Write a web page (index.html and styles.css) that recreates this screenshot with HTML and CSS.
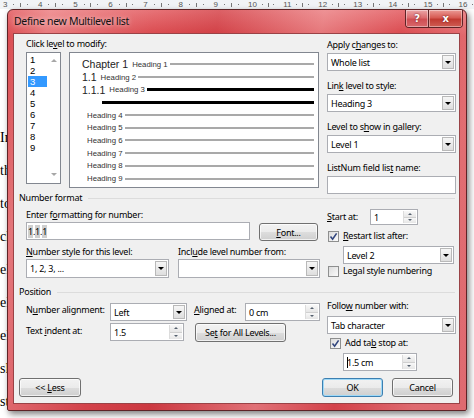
FILE: index.html
```html
<!DOCTYPE html>
<html lang="en">

<head>
  <meta charset="UTF-8">
  <meta name="viewport" content="width=device-width, initial-scale=1.0">
  <link rel="stylesheet" href="styles.css">
  <title>Define new Multilevel list</title>
</head>

<body>
  <div class="ruler">
    <span class="seg"><b>3</b><i class="dot"></i><i class="tick"></i><i class="dot"></i></span>
    <span class="seg"><b>4</b><i class="dot"></i><i class="tick"></i><i class="dot"></i></span>
    <span class="seg"><b>5</b><i class="dot"></i><i class="tick"></i><i class="dot"></i></span>
    <span class="seg"><b>6</b><i class="dot"></i><i class="tick"></i><i class="dot"></i></span>
    <span class="seg"><b>7</b><i class="dot"></i><i class="tick"></i><i class="dot"></i></span>
    <span class="seg"><b>8</b><i class="dot"></i><i class="tick"></i><i class="dot"></i></span>
    <span class="seg"><b>9</b><i class="dot"></i><i class="tick"></i><i class="dot"></i></span>
    <span class="seg"><b>10</b><i class="dot"></i><i class="tick"></i><i class="dot"></i></span>
    <span class="seg"><b>11</b><i class="dot"></i><i class="tick"></i><i class="dot"></i></span>
    <span class="seg"><b>12</b><i class="dot"></i><i class="tick"></i><i class="dot"></i></span>
    <span class="seg"><b>13</b><i class="dot"></i><i class="tick"></i><i class="dot"></i></span>
    <span class="seg"><b>14</b><i class="dot"></i><i class="tick"></i><i class="dot"></i></span>
    <span class="seg"><b>15</b><i class="dot"></i><i class="tick"></i><i class="dot"></i></span>
    <span class="seg"><b>16</b><i class="dot"></i><i class="tick"></i><i class="dot"></i></span>
  </div>

  <div class="desk">
    <div class="doc-edge">
      <div>In</div>
      <div>th</div>
      <div>to</div>
      <div>ch</div>
      <div>el</div>
      <div>el</div>
      <div>el</div>
      <div>sl</div>
      <div>st</div>
    </div>

    <div class="dialog">
      <div class="titlebar">
        <span class="title">Define new Multilevel list</span>
        <div class="caps">
          <span class="cap cap-help">?</span>
          <span class="cap cap-close">x</span>
        </div>
      </div>

      <div class="client">
        <!-- level picker, preview and style links -->
        <div class="top">
          <div class="col-left">
            <span class="lbl">Click le<u>v</u>el to modify:</span>
            <div class="pick">
              <div class="levels">
                <ol>
                  <li>1</li>
                  <li>2</li>
                  <li class="sel">3</li>
                  <li>4</li>
                  <li>5</li>
                  <li>6</li>
                  <li>7</li>
                  <li>8</li>
                  <li>9</li>
                </ol>
                <div class="sbar">
                  <i class="arr-up"></i>
                  <i class="arr-down"></i>
                </div>
              </div>
              <div class="preview">
                <div class="prow"><span class="num">Chapter 1</span><span class="hd">Heading 1</span><i class="line"></i></div>
                <div class="prow"><span class="num">1.1</span><span class="hd">Heading 2</span><i class="line"></i></div>
                <div class="prow cur"><span class="num">1.1.1</span><span class="hd">Heading 3</span><i class="line"></i></div>
                <div class="prow cur body"><i class="line"></i></div>
                <div class="prow sub"><span class="hd">Heading 4</span><i class="line"></i></div>
                <div class="prow sub"><span class="hd">Heading 5</span><i class="line"></i></div>
                <div class="prow sub"><span class="hd">Heading 6</span><i class="line"></i></div>
                <div class="prow sub"><span class="hd">Heading 7</span><i class="line"></i></div>
                <div class="prow sub"><span class="hd">Heading 8</span><i class="line"></i></div>
                <div class="prow sub"><span class="hd">Heading 9</span><i class="line"></i></div>
              </div>
            </div>
          </div>

          <div class="col-right">
            <div class="fld">
              <span class="lbl">Apply c<u>h</u>anges to:</span>
              <div class="box"><span>Whole list</span><span class="drop"></span></div>
            </div>
            <div class="fld">
              <span class="lbl">Lin<u>k</u> level to style:</span>
              <div class="box"><span>Heading 3</span><span class="drop"></span></div>
            </div>
            <div class="fld">
              <span class="lbl">Level to s<u>h</u>ow in gallery:</span>
              <div class="box"><span>Level 1</span><span class="drop"></span></div>
            </div>
            <div class="fld">
              <span class="lbl">ListNum field lis<u>t</u> name:</span>
              <div class="box"></div>
            </div>
          </div>
        </div>

        <div class="group-head">Number format</div>
        <div class="numfmt">
          <div class="col-left">
            <span class="lbl">Enter f<u>o</u>rmatting for number:</span>
            <div class="row">
              <div class="box fmt-box"><span><span class="fnum">1</span>.<span class="fnum">1</span>.<span class="fnum">1</span></span></div>
              <span class="btn font-btn"><span><u>F</u>ont...</span></span>
            </div>
            <div class="row pair">
              <div class="half">
                <span class="lbl"><u>N</u>umber style for this level:</span>
                <div class="box tall"><span>1, 2, 3, ...</span><span class="drop"></span></div>
              </div>
              <div class="half">
                <span class="lbl">Incl<u>u</u>de level number from:</span>
                <div class="box tall"><span class="drop"></span></div>
              </div>
            </div>
          </div>

          <div class="col-right">
            <div class="row start-row">
              <span class="lbl"><u>S</u>tart at:</span>
              <div class="box spin start-spin"><span>1</span><span class="spinner"><i class="s-up"></i><i class="s-down"></i></span></div>
            </div>
            <div class="check-row">
              <span class="chk on"><svg width="9" height="9" viewBox="0 0 9 9"><path d="M1.5 4.6 L3.6 7.2 L7.6 1.4" fill="none" stroke="#32467e" stroke-width="1.6"/></svg></span>
              <span class="lbl"><u>R</u>estart list after:</span>
            </div>
            <div class="box indent"><span>Level 2</span><span class="drop"></span></div>
            <div class="check-row">
              <span class="chk"></span>
              <span class="lbl">Le<u>g</u>al style numbering</span>
            </div>
          </div>
        </div>

        <div class="group-head pos-head">Position</div>
        <div class="pos">
          <div class="col-left">
            <div class="row">
              <span class="lbl cell">N<u>u</u>mber alignment:</span>
              <div class="box align-box"><span>Left</span><span class="drop"></span></div>
              <span class="lbl aligned-lbl"><u>A</u>ligned at:</span>
              <div class="box spin at-spin"><span>0 cm</span><span class="spinner"><i class="s-up"></i><i class="s-down"></i></span></div>
            </div>
            <div class="row second">
              <span class="lbl cell">Text <u>i</u>ndent at:</span>
              <div class="box spin indent-spin"><span>1.5</span><span class="spinner"><i class="s-up"></i><i class="s-down"></i></span></div>
              <span class="btn all-btn"><span>Se<u>t</u> for All Levels...</span></span>
            </div>
          </div>

          <div class="col-right">
            <span class="lbl">Follo<u>w</u> number with:</span>
            <div class="box follow-box"><span>Tab character</span><span class="drop"></span></div>
            <div class="check-row tab-row">
              <span class="chk on"><svg width="9" height="9" viewBox="0 0 9 9"><path d="M1.5 4.6 L3.6 7.2 L7.6 1.4" fill="none" stroke="#32467e" stroke-width="1.6"/></svg></span>
              <span class="lbl">Add ta<u>b</u> stop at:</span>
            </div>
            <div class="box spin indent tab-spin"><i class="caret"></i><span>1.5 cm</span><span class="spinner"><i class="s-up"></i><i class="s-down"></i></span></div>
          </div>
        </div>

        <div class="footer">
          <span class="btn less-btn"><span>&lt;&lt; <u>L</u>ess</span></span>
          <span class="btn ok-btn"><span>OK</span></span>
          <span class="btn cancel-btn"><span>Cancel</span></span>
        </div>
      </div>
    </div>
  </div>
</body>

</html>
```

FILE: styles.css
```css
body {
  margin: 0;
  width: 474px;
  height: 418px;
  overflow: hidden;
  background-color: #fdfdfd;
  font-family: 'Noto Sans', 'Open Sans', sans-serif;
  font-size: 9px;
  letter-spacing: -0.25px;
  color: #000;
}

u {
  text-underline-offset: 1px;
}

/* word ruler peeking out above the dialog */
.ruler {
  height: 9px;
  display: flex;
  overflow: hidden;
  background-color: #f1f3f6;
  font-family: 'Liberation Sans', sans-serif;
  font-size: 8px;
  line-height: 8px;
  letter-spacing: 0;
  color: #555;
}

.seg {
  flex: none;
  width: 35.1px;
  display: flex;
  align-items: center;
  justify-content: space-around;
  padding-right: 4px;
  box-sizing: border-box;
}

.seg b {
  font-weight: normal;
}

.seg .dot {
  width: 1px;
  height: 1px;
  background-color: #777;
}

.seg .tick {
  width: 1px;
  height: 4px;
  background-color: #777;
}

.desk {
  display: flex;
  height: 409px;
}

.doc-edge {
  flex: none;
  width: 7px;
  overflow: hidden;
  padding-top: 112px;
  font-family: 'Liberation Serif', serif;
  font-size: 14px;
  line-height: 33px;
  letter-spacing: 0;
  white-space: nowrap;
  background-color: #fff;
}

/* aero window frame */
.dialog {
  flex: none;
  width: 460px;
  height: 402px;
  box-sizing: border-box;
  display: flex;
  flex-direction: column;
  border: 1px solid #5e2326;
  border-radius: 6px 6px 2px 2px;
  background:
    linear-gradient(100deg, rgba(255, 255, 255, 0) 0%, rgba(255, 210, 210, 0.35) 8%, rgba(255, 255, 255, 0) 28%, rgba(160, 0, 10, 0.15) 40%, rgba(255, 220, 220, 0.3) 60%, rgba(255, 255, 255, 0) 75%, rgba(255, 225, 225, 0.25) 90%),
    linear-gradient(#e77276, #d9484d 26px, #d3424a);
  box-shadow: 2px 3px 6px rgba(0, 0, 0, 0.5);
}

.titlebar {
  height: 23px;
  flex: none;
  display: flex;
  align-items: flex-start;
  padding-left: 6px;
}

.title {
  font-size: 10.5px;
  line-height: 22px;
  letter-spacing: -0.3px;
  color: #111;
  text-shadow: 0 0 5px rgba(255, 255, 255, 0.8);
}

.caps {
  margin-left: auto;
  margin-right: 3px;
  display: flex;
  height: 17px;
  border: 1px solid #5e2326;
  border-top: none;
  border-radius: 0 0 4px 4px;
  overflow: hidden;
}

.cap {
  display: flex;
  align-items: center;
  justify-content: center;
  color: #fff;
  font-family: 'DejaVu Sans', sans-serif;
  font-weight: bold;
  font-size: 10px;
  text-shadow: 0 0 2px #5a0c0c;
  box-shadow: inset 0 0 0 1px rgba(255, 255, 255, 0.4);
}

.cap-help {
  width: 22px;
  border-right: 1px solid #5e2326;
  background: linear-gradient(#eba5a7, #dc6c6f 45%, #cf4e53 55%, #d9686b);
}

.cap-close {
  width: 33px;
  background: linear-gradient(#eb9a95, #d75b53 45%, #c13a31 55%, #cf5e54);
}

.client {
  flex: 1;
  margin: 0 6px 6px 5px;
  border: 1px solid #9a4246;
  background-color: #f0f0f0;
}

.lbl {
  display: block;
  line-height: 14px;
  white-space: nowrap;
}

.row {
  display: flex;
  align-items: flex-start;
}

/* generic white field with optional drop button */
.box {
  height: 18px;
  box-sizing: border-box;
  display: flex;
  align-items: center;
  padding-left: 3px;
  border: 1px solid #abadb3;
  background-color: #fff;
  white-space: nowrap;
}

.box.tall {
  height: 19px;
}

.drop {
  align-self: stretch;
  margin: 1px 1px 1px auto;
  width: 12px;
  box-sizing: border-box;
  border: 1px solid #b9b9b9;
  background: linear-gradient(#f6f6f6, #dedede);
  display: flex;
  align-items: center;
  justify-content: center;
}

.drop::after {
  content: '';
  border-left: 3px solid transparent;
  border-right: 3px solid transparent;
  border-top: 3px solid #000;
}

.spinner {
  align-self: stretch;
  margin: 1px 1px 1px auto;
  width: 12px;
  display: flex;
  flex-direction: column;
  border-left: 1px solid #dcdcdc;
}

.spinner i {
  flex: 1;
  display: flex;
  align-items: center;
  justify-content: center;
  background: linear-gradient(#f8f8f8, #e6e6e6);
}

.spinner .s-up {
  border-bottom: 1px solid #d0d0d0;
}

.s-up::after {
  content: '';
  border-left: 2.5px solid transparent;
  border-right: 2.5px solid transparent;
  border-bottom: 2.5px solid #55606e;
}

.s-down::after {
  content: '';
  border-left: 2.5px solid transparent;
  border-right: 2.5px solid transparent;
  border-top: 2.5px solid #55606e;
}

/* top area */
.top {
  display: flex;
  height: 154px;
  margin-top: 3px;
  padding-left: 12px;
}

.col-left {
  flex: none;
  width: 294px;
}

.col-right {
  flex: none;
  width: 129px;
  margin-left: 7px;
}

.top .col-right {
  margin-top: 1px;
}

.pick {
  display: flex;
  gap: 8px;
  margin-top: 1px;
}

.levels {
  width: 35px;
  height: 132px;
  box-sizing: border-box;
  display: flex;
  border: 1px solid #828790;
  background-color: #fff;
}

.levels ol {
  list-style: none;
  margin: 0;
  padding: 1px 0 0 1px;
  width: 19px;
}

.levels li {
  height: 11px;
  line-height: 11px;
  padding-left: 2px;
  font-family: 'Liberation Sans', sans-serif;
  font-size: 9.5px;
  letter-spacing: 0;
}

.levels li.sel {
  background-color: #3399ff;
  color: #fff;
}

.sbar {
  margin-left: auto;
  width: 13px;
  display: flex;
  flex-direction: column;
  justify-content: space-between;
  align-items: center;
  padding: 6px 0 7px;
}

.arr-up {
  border-left: 3px solid transparent;
  border-right: 3px solid transparent;
  border-bottom: 3px solid #a7a7a7;
}

.arr-down {
  border-left: 3px solid transparent;
  border-right: 3px solid transparent;
  border-top: 3px solid #a7a7a7;
}

.preview {
  width: 250px;
  height: 136px;
  box-sizing: border-box;
  padding: 5px 4px 0 12px;
  border: 1px solid #828790;
  background-color: #fff;
  font-family: 'Liberation Sans', sans-serif;
  letter-spacing: 0;
}

.prow {
  height: 12.7px;
  display: flex;
  align-items: center;
  white-space: nowrap;
}

.prow .num {
  font-size: 10.5px;
  color: #222;
  margin-right: 4px;
}

.prow .hd {
  font-size: 7.8px;
  color: #333;
}

.prow .line {
  flex: 1;
  height: 2px;
  margin-left: 2px;
  background-color: #a9a9a9;
}

.prow.cur .line {
  height: 3px;
  background-color: #000;
}

.prow.body {
  padding-left: 20px;
}

.prow.body .line {
  margin-left: 0;
}

.prow.sub {
  padding-left: 5px;
}

.fld .box {
  margin-top: 1px;
  margin-bottom: 8px;
}

/* grouped sections */
.group-head {
  height: 14px;
  line-height: 14px;
  padding-left: 5px;
  display: flex;
  align-items: center;
}

.group-head::after {
  content: '';
  flex: 1;
  height: 1px;
  margin: 1px 4px 0 6px;
  background-color: #dcdcdc;
}

.numfmt {
  display: flex;
  height: 73px;
  padding-left: 12px;
}

.numfmt .col-left {
  padding-top: 3px;
}

.numfmt .col-right {
  padding-top: 4px;
}

.fmt-box {
  width: 224px;
  padding-left: 1px;
}

.fnum {
  background-color: #cfcfcf;
}

.btn {
  height: 19px;
  box-sizing: border-box;
  display: flex;
  align-items: center;
  justify-content: center;
  border: 1px solid #707070;
  border-radius: 3px;
  background: linear-gradient(#f2f2f2 0%, #ebebeb 50%, #dddddd 51%, #cfcfcf 100%);
  box-shadow: inset 0 0 0 1px rgba(255, 255, 255, 0.7);
  white-space: nowrap;
}

.font-btn {
  width: 59px;
  height: 18px;
  margin: 1px 0 0 9px;
}

.pair {
  margin-top: 4px;
  gap: 9px;
}

.half {
  width: 143px;
}

.half + .half {
  width: 142px;
}

.start-row .lbl {
  width: 43px;
  line-height: 16px;
}

.start-spin {
  width: 48px;
  height: 16px;
}

.check-row {
  display: flex;
  align-items: center;
  height: 14px;
  gap: 4px;
  margin-top: 4px;
}

.check-row + .box + .check-row {
  margin-top: 0;
}

.chk {
  width: 11px;
  height: 11px;
  box-sizing: border-box;
  flex: none;
  display: flex;
  align-items: center;
  justify-content: center;
  border: 1px solid #8e8f8f;
  background: linear-gradient(135deg, #dcdcdc, #fbfbfb);
  margin-left: 1px;
}

.indent {
  margin-left: 16px;
}

.numfmt .indent {
  margin-top: 3px;
  width: 111px;
}

.pos-head {
  margin-top: 7px;
}

.pos {
  display: flex;
  height: 71px;
  padding-left: 12px;
}

.pos .col-left {
  padding-top: 4px;
}

.cell {
  width: 84px;
  line-height: 13px;
}

.align-box {
  width: 77px;
}

.aligned-lbl {
  width: 51px;
  margin-left: 7px;
  line-height: 13px;
}

.at-spin {
  width: 75px;
}

.second {
  margin-top: 2px;
}

.indent-spin {
  width: 74px;
}

.all-btn {
  width: 91px;
  margin-left: 11px;
}

.second .cell {
  margin-top: 1px;
}

.follow-box {
  margin-top: 3px;
}

.tab-row {
  margin-top: 2px;
  padding-left: 2px;
}

.tab-spin {
  width: 74px;
  margin-top: 3px;
}

.caret {
  width: 1px;
  height: 11px;
  background-color: #000;
  margin-right: -1px;
}

.footer {
  display: flex;
  margin-top: 8px;
  padding: 0 6px 0 5px;
}

.less-btn {
  width: 62px;
}

.ok-btn {
  width: 61px;
  margin-left: auto;
  border-color: #3c7fb1;
  box-shadow: inset 0 0 0 1px #9fd9f7;
}

.cancel-btn {
  width: 61px;
  margin-left: 9px;
}
```
